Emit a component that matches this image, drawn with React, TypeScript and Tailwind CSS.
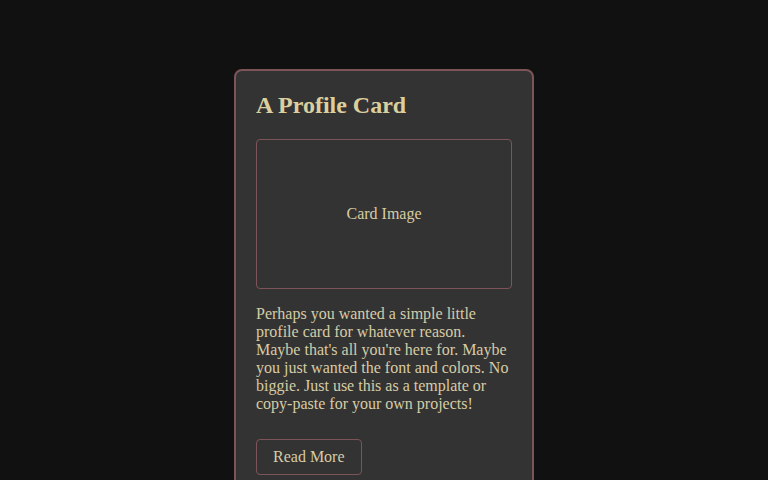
export default function App() {
  return (
    <div className="min-h-screen bg-[#111111] flex justify-center pt-[69px]" style={{ fontFamily: '"Liberation Serif", serif' }}>
      <div className="w-[300px] h-[440px] rounded-lg border-2 border-[#7d5558] bg-[#333333] p-5 text-[#d6cca6]">
        <h1 className="text-2xl font-bold leading-[28px] text-[#dccf9e]">A Profile Card</h1>
        <div className="mt-5 h-[150px] rounded border border-[#7d5558] flex items-center justify-center text-base">
          Card Image
        </div>
        <p className="mt-4 text-base leading-[18px]">
          Perhaps you wanted a simple little profile card for whatever reason. Maybe that's all you're here for. Maybe you just wanted the font and colors. No biggie. Just use this as a template or copy-paste for your own projects!
        </p>
        <button className="mt-[26px] h-9 px-4 rounded border border-[#7d5558] text-base text-[#d6cca6]">Read More</button>
      </div>
    </div>
  );
}
